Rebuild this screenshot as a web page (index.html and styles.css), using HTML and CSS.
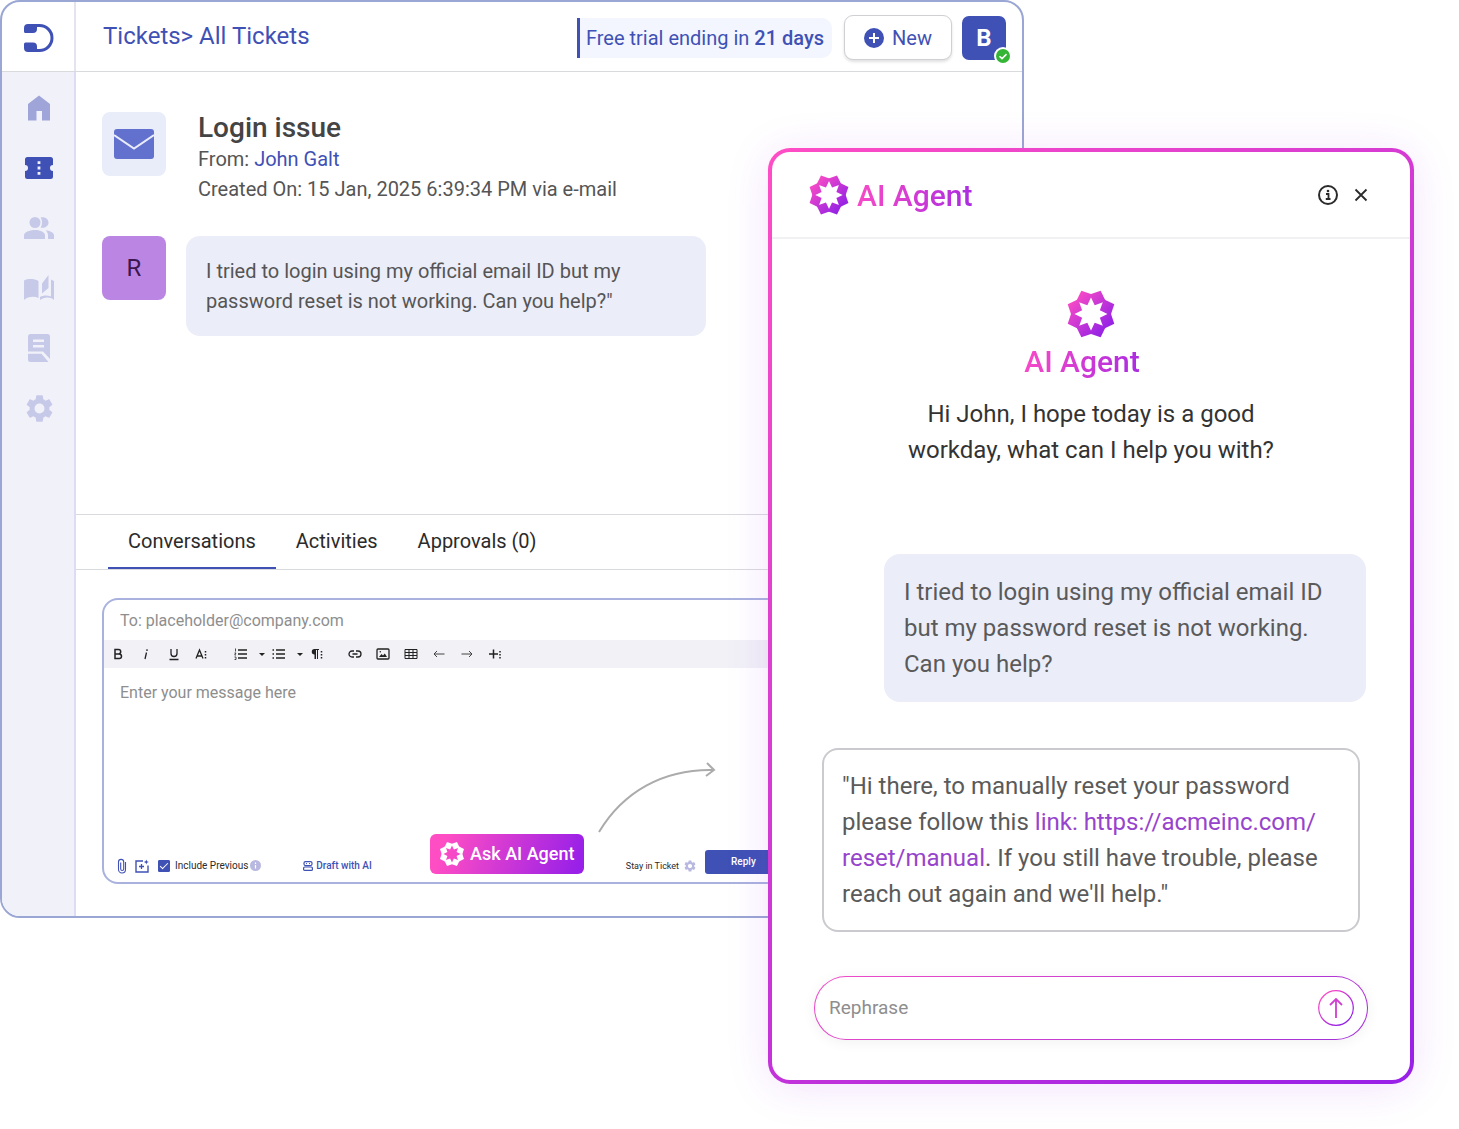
FILE: index.html
```html
<!DOCTYPE html>
<html lang="en">
<head>
<meta charset="utf-8">
<meta name="viewport" content="width=device-width, initial-scale=1">
<title>All Tickets</title>
<link rel="stylesheet" href="styles.css">
</head>
<body>
<svg class="defs" aria-hidden="true">
  <defs>
    <linearGradient id="brand" x1="0" y1="0" x2="1" y2="1">
      <stop offset="0.1" stop-color="#ff4dc4"/><stop offset="0.9" stop-color="#8a1ee8"/>
    </linearGradient>
    <path id="petal" d="M0-21 7.3-14.6 0-8 -7.3-14.6z"/>
    <g id="petals">
      <use href="#petal" transform="rotate(22.5)"/><use href="#petal" transform="rotate(67.5)"/>
      <use href="#petal" transform="rotate(112.5)"/><use href="#petal" transform="rotate(157.5)"/>
      <use href="#petal" transform="rotate(202.5)"/><use href="#petal" transform="rotate(247.5)"/>
      <use href="#petal" transform="rotate(292.5)"/><use href="#petal" transform="rotate(337.5)"/>
    </g>
    <mask id="petal-mask" maskUnits="userSpaceOnUse" x="-21" y="-21" width="42" height="42"><use href="#petals" fill="#fff"/></mask>
    <symbol id="flower" viewBox="-20 -20 40 40"><rect x="-20" y="-20" width="40" height="40" fill="url(#brand)" mask="url(#petal-mask)"/></symbol>
    <symbol id="gear" viewBox="0 0 24 24"><path d="M19.14 12.94c.04-.3.06-.61.06-.94 0-.32-.02-.64-.07-.94l2.03-1.58c.18-.14.23-.41.12-.61l-1.92-3.32c-.12-.22-.37-.29-.59-.22l-2.39.96c-.5-.38-1.03-.7-1.62-.94l-.36-2.54c-.04-.24-.24-.41-.48-.41h-3.84c-.24 0-.43.17-.47.41l-.36 2.54c-.59.24-1.13.57-1.62.94l-2.39-.96c-.22-.08-.47 0-.59.22L2.74 8.87c-.12.21-.08.47.12.61l2.03 1.58c-.05.3-.09.63-.09.94s.02.64.07.94l-2.03 1.58c-.18.14-.23.41-.12.61l1.92 3.32c.12.22.37.29.59.22l2.39-.96c.5.38 1.03.7 1.62.94l.36 2.54c.05.24.24.41.48.41h3.84c.24 0 .44-.17.47-.41l.36-2.54c.59-.24 1.13-.56 1.62-.94l2.39.96c.22.08.47 0 .59-.22l1.92-3.32c.12-.22.07-.47-.12-.61l-2.01-1.58zM12 15.6c-1.98 0-3.6-1.62-3.6-3.6s1.62-3.6 3.6-3.6 3.6 1.62 3.6 3.6-1.62 3.6-3.6 3.6z"/></symbol>
  </defs>
</svg>

<div class="stage">
  <div class="window">
    <header class="topbar">
      <a class="brand" href="#" aria-label="Home">
        <svg width="30" height="28" viewBox="0 0 30 28"><path d="M10 1.500h5.500a12.300 12.300 0 0 1 0 25H10" fill="none" stroke="#3f51b5" stroke-width="3"/><path d="M4 0h9v5a4 4 0 0 1-4 4H1.500A1.500 1.500 0 0 1 0 7.500V4a4 4 0 0 1 4-4zM1.500 18.500H9a4 4 0 0 1 4 4V28H4a4 4 0 0 1-4-4v-4a1.500 1.500 0 0 1 1.500-1.500z" fill="#3f51b5"/></svg>
      </a>
      <h1 class="crumbs">Tickets&gt; All Tickets</h1>
      <div class="trial">Free trial ending in <b>21 days</b></div>
      <button class="new" type="button">
        <svg width="20" height="20" viewBox="0 0 20 20"><circle cx="10" cy="10" r="10" fill="#3f51b5"/><path d="M10 5v10M5 10h10" stroke="#fff" stroke-width="2"/></svg>
        New
      </button>
      <button class="account" type="button">B
        <svg class="status" width="18" height="18" viewBox="0 0 18 18"><circle cx="9" cy="9" r="9" fill="#fff"/><circle cx="9" cy="9" r="7" fill="#35b535"/><path d="M5.500 9.200l2.500 2.400 4.500-4.500" fill="none" stroke="#fff" stroke-width="1.500"/></svg>
      </button>
    </header>

    <div class="body">
      <nav class="sidebar" aria-label="Main">
        <a class="home" href="#" aria-label="Dashboard"><svg width="24" height="26" viewBox="0 0 24 26"><path d="M12 .5 23 9v16.500h-8V16H9.500v9.500H1V9z"/></svg></a>
        <a class="active" href="#" aria-label="Tickets"><svg width="28" height="22" viewBox="0 0 28 22"><path fill-rule="evenodd" d="M2.500 0h23A2.500 2.500 0 0 1 28 2.500V8a3 3 0 0 0 0 6v5.500a2.500 2.500 0 0 1-2.500 2.500h-23A2.500 2.500 0 0 1 0 19.500V14a3 3 0 0 0 0-6V2.500A2.500 2.500 0 0 1 2.500 0zM12.600 4.200v2.800h2.800V4.200zm0 5.400v2.800h2.800V9.600zm0 5.400v2.800h2.800V15z"/></svg></a>
        <a href="#" aria-label="Contacts"><svg width="30" height="22" viewBox="0 0 30 22"><circle cx="11" cy="5.500" r="5.500"/><path d="M0 22v-3.500C0 14.500 7 13 11 13s10 1.500 10 5.500V22zM16.500 10.500c2-2.500 2-7.500 0-10 4-1.200 8 1.200 8 5s-4 6.200-8 5zM21.500 13.300c4 .6 8.500 2 8.500 5.200V22h-6v-3.500c0-2-.8-3.800-2.500-5.200z"/></svg></a>
        <a href="#" aria-label="Knowledge base"><svg width="30" height="26" viewBox="0 0 30 26"><path d="M0 5.500C4 3.500 10 3.500 14.500 6v17C10 21 4 21.500 0 25zM18 8.500 24.500 0v13L18 18.500zM27 4.500l3 1.500v19c-4-3.500-10-3-14 0v-3c3.500-2 7.500-2 11-.5z"/></svg></a>
        <a href="#" aria-label="Reports"><svg width="22" height="28" viewBox="0 0 22 28"><path fill-rule="evenodd" d="M2.500 0h17A2.500 2.500 0 0 1 22 2.500V25l-7-7.500H0v-15A2.500 2.500 0 0 1 2.500 0zM5 5.500V8h11V5.500zm0 5.500v2.500h11V11zM0 19.800h13.500L20.500 28h-18A2.500 2.500 0 0 1 0 25.500z"/></svg></a>
        <a href="#" aria-label="Settings"><svg width="33" height="33"><use href="#gear"/></svg></a>
      </nav>

      <main class="main">
        <section class="ticket">
          <div class="ticket-head">
            <div class="tile mail"><svg width="40" height="30" viewBox="0 0 40 30"><rect width="40" height="30" rx="3" fill="#6271ce"/><path d="M0 6 20 19.500 40 6" fill="none" stroke="#e9ecf9" stroke-width="2"/></svg></div>
            <div class="ticket-info">
              <h2>Login issue</h2>
              <p>From: <a href="#">John Galt</a></p>
              <p>Created On: 15 Jan, 2025 6:39:34 PM via e-mail</p>
            </div>
          </div>
          <div class="entry">
            <div class="tile initial">R</div>
            <p class="bubble">I tried to login using my official email ID but my password reset is not working. Can you help?"</p>
          </div>
        </section>

        <div class="tabs" role="tablist">
          <button type="button" role="tab" class="selected" aria-selected="true">Conversations</button>
          <button type="button" role="tab" aria-selected="false">Activities</button>
          <button type="button" role="tab" aria-selected="false">Approvals (0)</button>
        </div>

        <form class="composer">
          <input class="to" type="text" aria-label="To" placeholder="To: placeholder@company.com">
          <div class="tools">
            <button type="button" aria-label="Bold"><svg width="14" height="14" viewBox="0 0 14 14"><path d="M4 2.500h3.500a2.200 2.200 0 0 1 0 4.400H4zm0 4.400h4.200a2.300 2.300 0 0 1 0 4.600H4z" fill="none" stroke="#222" stroke-width="1.500"/></svg></button>
            <button type="button" aria-label="Italic"><svg width="14" height="14" viewBox="0 0 14 14"><path d="M7.500 5.500 6 12M8 2.200v1.800" stroke="#222" stroke-width="1.300"/></svg></button>
            <button type="button" aria-label="Underline"><svg width="14" height="14" viewBox="0 0 14 14"><path d="M4 2v4.500a3 3 0 0 0 6 0V2M2.500 12.500h9" fill="none" stroke="#222" stroke-width="1.300"/></svg></button>
            <button type="button" aria-label="Font"><svg width="14" height="14" viewBox="0 0 14 14"><path d="M1 11.500 4.500 3 8 11.500M2.300 9h4.400" fill="none" stroke="#222" stroke-width="1.300"/><path d="M10.500 4v8" stroke="#222" stroke-width="1.500" stroke-dasharray="1.500"/></svg></button>
            <span class="tool-group">
              <button type="button" aria-label="Numbered list"><svg width="14" height="14" viewBox="0 0 14 14"><path d="M4 3h9M4 7h9M4 11h9" stroke="#222" stroke-width="1.300"/><path d="M1.500 1.500v3M.5 6h1.500L.7 8H2M.5 10H2v2.500H.5" fill="none" stroke="#222" stroke-width=".8"/></svg></button>
              <button class="caret" type="button" aria-label="Numbered list styles"><svg width="6" height="3" viewBox="0 0 6 3"><path d="M0 0h6L3 3z"/></svg></button>
              <button type="button" aria-label="Bulleted list"><svg width="14" height="14" viewBox="0 0 14 14"><path d="M4 3h9M4 7h9M4 11h9M.5 3H2M.5 7H2M.5 11H2" stroke="#222" stroke-width="1.300"/></svg></button>
              <button class="caret" type="button" aria-label="Bulleted list styles"><svg width="6" height="3" viewBox="0 0 6 3"><path d="M0 0h6L3 3z"/></svg></button>
              <button type="button" aria-label="Paragraph"><svg width="14" height="14" viewBox="0 0 14 14"><path d="M4.500 7.500a2.700 2.700 0 0 1 0-5.500H9v1H8v9H7V3H6v9H4.500z" fill="#222"/><path d="M11.500 4v8" stroke="#222" stroke-width="1.500" stroke-dasharray="1.500"/></svg></button>
            </span>
            <button type="button" aria-label="Link"><svg width="14" height="14" viewBox="0 0 14 14"><path d="M6 10H4a3 3 0 0 1 0-6h2M8 4h2a3 3 0 0 1 0 6H8M4.500 7h5" fill="none" stroke="#222" stroke-width="1.300"/></svg></button>
            <button type="button" aria-label="Image"><svg width="14" height="14" viewBox="0 0 14 14"><rect x="1" y="2" width="12" height="10" rx="1" fill="none" stroke="#222" stroke-width="1.300"/><path d="M3 10l2.500-3L7 8.500 8.800 6.500 11 10z" fill="#222"/><circle cx="4.300" cy="4.800" r=".8" fill="#222"/></svg></button>
            <button type="button" aria-label="Table"><svg width="14" height="14" viewBox="0 0 14 14"><path d="M1 2.500h12v9H1zM1 5.500h12M1 8.500h12M5 2.500v9M9 2.500v9" fill="none" stroke="#222"/></svg></button>
            <button type="button" aria-label="Undo"><svg width="14" height="14" viewBox="0 0 14 14"><path d="M12.500 7H2M5 4 2 7l3 3" fill="none" stroke="#444"/></svg></button>
            <button type="button" aria-label="Redo"><svg width="14" height="14" viewBox="0 0 14 14"><path d="M1.500 7H12M9 4l3 3-3 3" fill="none" stroke="#444"/></svg></button>
            <button type="button" aria-label="More"><svg width="14" height="14" viewBox="0 0 14 14"><path d="M1 7h9M5.500 2.500v9" stroke="#222" stroke-width="1.500"/><path d="M12 4v7.500" stroke="#222" stroke-width="1.500" stroke-dasharray="1.500"/></svg></button>
          </div>
          <textarea class="message" aria-label="Message" placeholder="Enter your message here"></textarea>
          <svg class="hint-arrow" width="118" height="74" viewBox="0 0 118 74" aria-hidden="true"><path d="M1 72C25 32 65 9 115 10M109 3l7 7-8 6" fill="none" stroke="#ababab" stroke-width="2"/></svg>
          <div class="actions">
            <button class="plain" type="button" aria-label="Attach"><svg width="10" height="16" viewBox="0 0 10 16"><path d="M8.500 4v7.500a3.500 3.500 0 0 1-7 0V4a2.500 2.500 0 0 1 5.200 0v7a1.500 1.500 0 0 1-3 0V4.500" fill="none" stroke="#3f51b5" stroke-width="1.100"/></svg></button>
            <button class="plain" type="button" aria-label="Insert template"><svg width="14" height="14" viewBox="0 0 14 14"><path d="M8 2H1v11h12V6.500" fill="none" stroke="#3f51b5" stroke-width="1.400"/><path d="M6.500 5v5M4 7.500h5" stroke="#3f51b5" stroke-width="1.300"/><path d="M11.300.5l.7 1.800 1.800.7-1.800.7-.7 1.800-.7-1.800L8.800 3l1.800-.7z" fill="#3f51b5"/></svg></button>
            <label class="include"><input type="checkbox" checked>Include Previous</label>
            <svg class="info-dot" width="11" height="11" viewBox="0 0 11 11"><circle cx="5.500" cy="5.500" r="5.500" fill="#b9b8e0"/><path d="M5.500 5v3.500M5.500 2.500V4" stroke="#fff" stroke-width="1.200"/></svg>
            <button class="plain draft" type="button"><svg width="10" height="10" viewBox="0 0 10 10"><rect x="1" y=".6" width="8" height="4" rx="1.500" fill="none" stroke="#3f51b5" stroke-width="1.200"/><rect x=".6" y="6" width="8.800" height="3.400" rx="1" fill="none" stroke="#3f51b5" stroke-width="1.200"/><path d="M3 2.600h1M6 2.600h1" stroke="#3f51b5"/></svg>Draft with AI</button>
            <button class="ask" type="button"><svg width="26" height="26" viewBox="-21 -21 42 42"><use href="#petals" fill="#fff"/></svg>Ask AI Agent</button>
            <span class="stay">Stay in Ticket</span>
            <button class="plain stay-gear" type="button" aria-label="Reply settings"><svg width="14" height="14"><use href="#gear"/></svg></button>
            <button class="reply" type="submit">Reply</button>
          </div>
        </form>
      </main>
    </div>
  </div>

  <aside class="agent" aria-label="AI Agent">
    <header class="agent-head">
      <svg width="40" height="40"><use href="#flower"/></svg>
      <h2 class="agent-name">AI Agent</h2>
      <button class="plain" type="button" aria-label="About"><svg width="20" height="20" viewBox="0 0 20 20"><circle cx="10" cy="10" r="9" fill="none" stroke="#2b2b2b" stroke-width="2"/><path d="M8 9h2.500v5M7.800 14h4.700" fill="none" stroke="#2b2b2b" stroke-width="1.800"/><circle cx="10" cy="6" r="1.300" fill="#2b2b2b"/></svg></button>
      <button class="plain" type="button" aria-label="Close"><svg width="14" height="14" viewBox="0 0 14 14"><path d="M1.500 1.500l11 11M12.500 1.500l-11 11" stroke="#2b2b2b" stroke-width="1.800"/></svg></button>
    </header>
    <div class="agent-intro">
      <svg width="48" height="48"><use href="#flower"/></svg>
      <h3 class="agent-name">AI Agent</h3>
      <p>Hi John, I hope today is a good<br>workday, what can I help you with?</p>
    </div>
    <p class="question">I tried to login using my official email ID but my password reset is not working. Can you help?</p>
    <p class="answer">"Hi there, to manually reset your password please follow this <a href="#">link: https://acmeinc.com/<wbr>reset/manual</a>. If you still have trouble, please reach out again and we'll help."</p>
    <form class="rephrase">
      <input type="text" aria-label="Rephrase" placeholder="Rephrase">
      <button type="submit" aria-label="Send"><svg width="36" height="36" viewBox="0 0 36 36"><circle cx="18" cy="18" r="17.300" fill="none" stroke="url(#brand)" stroke-width="1.300"/><path d="M18 28V9M12 15l6-6 6 6" fill="none" stroke="#d03fd0" stroke-width="1.800"/></svg></button>
    </form>
  </aside>
</div>
</body>
</html>
```

FILE: styles.css
```css
*, *::before { box-sizing: border-box; }

body {
  margin: 0;
  background: #fff;
  color: #4d4d4d;
  font-family: Roboto, "Liberation Sans", sans-serif;
  font-size: 20px;
  line-height: 30px;
}

h1, h2, h3, p { margin: 0; }
a { text-decoration: none; }
svg { display: block; flex: none; }
button, input, textarea { font: inherit; color: inherit; }
button { padding: 0; border: 0; background: none; cursor: pointer; }
.defs { position: absolute; width: 0; height: 0; }

/* The agent panel shares its first column with the right part of the window. */
.stage {
  display: grid;
  grid-template-columns: minmax(0, 768fr) minmax(0, 256fr) minmax(0, 390fr);
  align-items: start;
  padding: 0 45px 46px 0;
}

.window {
  grid-area: 1 / 1 / 2 / 3;
  overflow: hidden;
  border: 2px solid #9aa6d3;
  border-radius: 20px;
  background: #fff;
}

/* Top bar */
.topbar {
  display: flex;
  align-items: center;
  height: 70px;
  padding: 2px 16px 0 0;
  border-bottom: 1px solid #d9dade;
  color: #3f51b5;
}
.brand {
  display: flex;
  align-items: center;
  justify-content: center;
  align-self: stretch;
  flex: none;
  width: 74px;
  margin-top: -2px;
  padding: 2px 0 0 2px;
  border-right: 2px solid #e3e4ee;
}
.crumbs {
  flex: 1;
  padding: 0 0 4px 27px;
  font-size: 24px;
  font-weight: 400;
  white-space: nowrap;
}
.trial {
  height: 40px;
  margin-right: 12px;
  padding: 0 8px 0 6px;
  border-left: 3px solid #3f51b5;
  border-radius: 0 10px 10px 0;
  background: #f3f6fe;
  line-height: 40px;
  white-space: nowrap;
}
.trial b { font-weight: 500; }
.new {
  display: flex;
  align-items: center;
  justify-content: center;
  gap: 8px;
  width: 108px;
  height: 45px;
  margin-right: 10px;
  border: 1px solid #cfcfd4;
  border-radius: 9px;
  background: #fff;
  box-shadow: 0 2px 3px rgba(0, 0, 0, .12);
}
.account {
  position: relative;
  width: 44px;
  height: 44px;
  border-radius: 7px;
  background: #3f51b5;
  color: #fff;
  font-size: 24px;
  font-weight: 700;
}
.status { position: absolute; right: -6px; bottom: -5px; }

/* Sidebar */
.body { display: flex; }
.sidebar {
  flex: none;
  width: 74px;
  padding: 6px 0 0 2px;
  border-right: 2px solid #dcdcf6;
  background: #f1f2f9;
}
.sidebar a {
  display: flex;
  align-items: center;
  justify-content: center;
  height: 60px;
  fill: #c7c9e8;
}
.sidebar .home { fill: #9fa5d8; }
.sidebar .active { fill: #3f51b5; }

.main { flex: 1; min-width: 0; }

/* Ticket */
.ticket {
  display: flex;
  flex-direction: column;
  gap: 32px;
  min-height: 442px;
  padding: 40px 26px;
}
.ticket-head { display: flex; gap: 32px; }
.tile {
  display: flex;
  align-items: center;
  justify-content: center;
  flex: none;
  width: 64px;
  height: 64px;
  border-radius: 8px;
}
.mail { background: #e9ecf9; }
.initial { background: #bb86e3; color: #3b1752; font-size: 24px; }
.ticket-info h2 {
  color: #444;
  font-size: 28px;
  font-weight: 500;
  line-height: 32px;
}
.ticket-info a { color: #3f51b5; }
.ticket-info { color: #555; }
.entry { display: flex; gap: 20px; }
.bubble {
  max-width: 520px;
  padding: 20px;
  border-radius: 14px;
  background: #ebedf9;
  color: #555;
}

/* Tabs */
.tabs {
  display: flex;
  height: 56px;
  padding-left: 32px;
  border-top: 1px solid #d9dade;
  border-bottom: 1px solid #d9dade;
}
.tabs button {
  padding: 0 20px;
  border-bottom: 2px solid transparent;
  color: #2b2b2b;
}
.tabs .selected { border-color: #3f51b5; }

/* Composer */
.composer {
  position: relative;
  display: flex;
  flex-direction: column;
  margin: 28px 26px 32px;
  overflow: hidden;
  border: 2px solid #a9b2de;
  border-radius: 16px;
}
.to, .message {
  width: 100%;
  padding: 0 16px;
  border: 0;
  outline: 0;
  background: none;
  color: #4d4d4d;
  font-size: 16px;
}
.to { height: 40px; }
.message {
  height: 166px;
  padding-top: 10px;
  resize: none;
}
::placeholder { color: #8e8e8e; opacity: 1; }
.tools {
  display: flex;
  height: 28px;
  background: #f1f1f6;
}
.tools button {
  display: flex;
  align-items: center;
  justify-content: center;
  width: 28px;
  fill: #222;
}
.tool-group { display: flex; margin: 0 12px 0 13px; }
.tool-group button { width: 24px; }
.tool-group .caret { width: 14px; padding-left: 4px; }
.hint-arrow { position: absolute; left: 494px; top: 160px; }

.actions {
  display: flex;
  align-items: flex-end;
  padding: 0 0 8px 13px;
  color: #2b2b2b;
  font-size: 10px;
  font-weight: 500;
  line-height: 16px;
  white-space: nowrap;
}
.actions .plain {
  display: flex;
  align-items: center;
  height: 16px;
  margin-right: 8px;
}
.include { display: flex; align-items: center; gap: 5px; margin-left: 1px; font-weight: 400; }
.include input {
  appearance: none;
  width: 12px;
  height: 12px;
  margin: 0;
  border: 1px solid #3f51b5;
  border-radius: 1px;
}
.include input:checked {
  background: #3f51b5;
}
.include input:checked::before {
  content: "";
  display: block;
  width: 8px;
  height: 4px;
  margin: 2px 1px;
  border: solid #fff;
  border-width: 0 0 1px 1px;
  transform: rotate(-45deg);
}
.info-dot { margin: 0 42px 3px 2px; }
.actions .draft { gap: 3px; margin-right: 58px; color: #3f51b5; }
.ask {
  display: flex;
  align-items: center;
  justify-content: center;
  gap: 5px;
  width: 154px;
  height: 40px;
  margin-right: 42px;
  border-radius: 6px;
  background: linear-gradient(110deg, #ff4dc4 10%, #9820e8 95%);
  color: #fff;
  font-size: 18px;
  font-weight: 500;
}
.stay { margin-right: 4px; font-size: 9px; font-weight: 400; }
.stay-gear { fill: #b9b8e0; }
.reply {
  width: 108px;
  height: 24px;
  padding-left: 26px;
  border-radius: 3px;
  background: #3f51b5;
  color: #fff;
  text-align: left;
}

/* Agent panel */
.agent {
  position: relative;
  z-index: 1;
  grid-area: 1 / 2 / 2 / 4;
  margin-top: 148px;
  padding-bottom: 40px;
  border: 4px solid transparent;
  border-radius: 22px;
  background:
    linear-gradient(#fff, #fff) padding-box,
    linear-gradient(135deg, #ff4dc4, #9820e8) border-box;
  box-shadow: 0 4px 44px rgba(170, 60, 240, .14);
  font-size: 24px;
  line-height: 36px;
}
.agent-head {
  display: flex;
  align-items: center;
  height: 87px;
  padding: 0 42px 0 37px;
  border-bottom: 2px solid #f1f1f3;
}
.agent-name {
  background: linear-gradient(100deg, #f94bc6, #a92be2);
  background-clip: text;
  color: transparent;
  font-size: 30px;
  font-weight: 500;
}
.agent-head .agent-name { margin: 2px auto 0 8px; }
.agent-head .plain + .plain { margin-left: 16px; }
.agent-intro {
  display: flex;
  flex-direction: column;
  align-items: center;
  padding-top: 51px;
  color: #333;
  text-align: center;
}
.agent-intro .agent-name { margin: 6px 18px 16px 0; }
.question, .answer { color: #5a5a5a; }
.question {
  width: 482px;
  max-width: 100%;
  margin: 86px 44px 0 auto;
  padding: 20px;
  border-radius: 16px;
  background: #ebedf9;
}
.answer {
  margin: 46px 50px 0;
  padding: 18px;
  border: 2px solid #cbcbcf;
  border-radius: 16px;
}
.answer a { color: #9744cc; }
.rephrase {
  display: flex;
  align-items: center;
  height: 64px;
  margin: 44px 42px 0;
  padding: 0 13px 0 14px;
  border: 1px solid transparent;
  border-radius: 32px;
  background:
    linear-gradient(#fff, #fff) padding-box,
    linear-gradient(150deg, #f04cc8, #a030d8) border-box;
  box-shadow: 0 2px 14px rgba(0, 0, 0, .06);
}
.rephrase input {
  flex: 1;
  min-width: 0;
  padding: 0;
  border: 0;
  outline: 0;
  background: none;
  font-size: 19px;
}
```
